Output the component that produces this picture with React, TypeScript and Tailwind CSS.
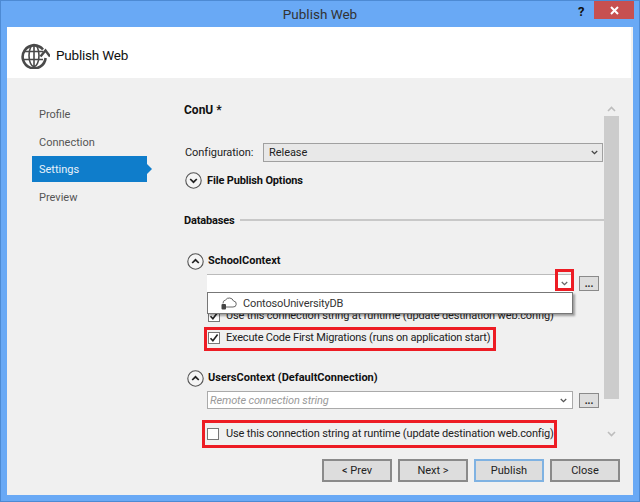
const F = "font-['Roboto',sans-serif]";

function Chevron({ up = false, small = false, className = "" }: { up?: boolean; small?: boolean; className?: string }) {
  return (
    <svg width={small ? 7 : 9} height={small ? 5 : 6} viewBox="0 0 9 6" className={className} fill="none" stroke="currentColor" strokeWidth="1.6">
      <path d={up ? "M1 5l3.5-3.5L8 5" : "M1 1l3.5 3.5L8 1"} />
    </svg>
  );
}

function Expander({ up = false }: { up?: boolean }) {
  return (
    <svg width="17" height="17" viewBox="0 0 17 17" fill="none" className="shrink-0">
      <circle cx="8.5" cy="8.5" r="7.7" fill="#f5f5f5" stroke="#555" strokeWidth="1.1" />
      <path d={up ? "M5.2 10l3.3-3.2 3.3 3.2" : "M5.2 7l3.3 3.2L11.8 7"} stroke="#222" strokeWidth="1.7" />
    </svg>
  );
}

function Check({ checked = false }: { checked?: boolean }) {
  return (
    <span className="w-[12px] h-[12px] shrink-0 border border-[#777] bg-white flex items-center justify-center">
      {checked && (
        <svg width="10" height="10" viewBox="0 0 10 10" fill="none">
          <path d="M1.5 5.2l2.4 2.6L8.6 1.6" stroke="#222" strokeWidth="1.6" />
        </svg>
      )}
    </span>
  );
}

function Btn({ label, focus = false }: { label: string; focus?: boolean }) {
  return (
    <div
      className={`w-[70px] h-[23px] flex items-center justify-center border-2 bg-[#dddddd] text-[#222] ${
        focus ? "border-[#7fb2e2]" : "border-[#8a8a8a]"
      }`}
    >
      <span className="mt-[2px]">{label}</span>
    </div>
  );
}

function Dots() {
  return (
    <div className="ml-[6px] w-[20px] h-[15px] border border-[#8a8a8a] bg-[#dddddd] flex items-end justify-center text-[#222] text-[10px] leading-[12px] font-bold">
      ...
    </div>
  );
}

export default function App() {
  return (
    <div className={`${F} w-[640px] h-[502px] bg-[#69a9f5] border border-[#4d8ad3] flex flex-col text-[11px] text-[#222] overflow-hidden`}>
      <div className="relative h-[26px] shrink-0 flex items-center justify-center text-[13.5px] text-[#333]">
        Publish Web
        <span className="absolute left-[577px] top-[1px] text-[13px] font-bold text-[#111]">?</span>
        <div className="absolute left-[593px] top-0 w-[40px] h-[18px] bg-[#c75050] flex items-center justify-center">
          <svg width="9" height="9" viewBox="0 0 9 9" fill="none">
            <path d="M1 1l7 7M8 1L1 8" stroke="#fff" strokeWidth="2" />
          </svg>
        </div>
      </div>

      <div className="flex-1 mx-[6px] mb-[6px] bg-[#f0f0f0] flex flex-col min-h-0">
        <div className="h-[51px] mr-[2px] shrink-0 bg-white flex items-center pl-[14px] pt-[5px] gap-[6px] text-[13.5px] tracking-[-0.2px] text-[#111]">
          <svg width="29" height="27" viewBox="0 0 29 27" fill="none" stroke="#4a4a4a">
            <path d="M22 7.5A11.5 11.5 0 1 0 24.6 16" strokeWidth="2.6" />
            <ellipse cx="13" cy="13.5" rx="5" ry="11" strokeWidth="1.6" />
            <path d="M2 9.5h20M2 17.5h20M13 2v23" strokeWidth="1.6" />
            <path d="M19.5 14.5l5-6 4.5 6" strokeWidth="2.4" fill="none" />
          </svg>
          <span>Publish Web</span>
        </div>

        <div className="flex-1 flex min-h-0">
          <nav className="w-[177px] shrink-0 pl-[25px] pt-[23px] text-[#555]">
            <div className="h-[28px] pl-[7px] flex items-center">Profile</div>
            <div className="h-[27px] pl-[7px] flex items-center"><span className="mt-[2px]">Connection</span></div>
            <div className="relative h-[26px] w-[115px] pl-[7px] flex items-center bg-[#0f7dcb] text-[#e8f2fa]">
              <span className="mt-[2px]">Settings</span>
              <span className="absolute left-full top-[8px] border-y-[5px] border-y-transparent border-l-[5px] border-l-[#0f7dcb]" />
            </div>
            <div className="h-[30px] pl-[7px] flex items-center"><span className="mt-[2px]">Preview</span></div>
          </nav>

          <main className="w-[420px] shrink-0 pt-[22px] flex flex-col">
            <div className="h-[18px] flex items-center font-bold text-[#111] text-[12px]">
              <span className="mt-[2px]">ConU *</span>
            </div>
            <div className="mt-[25px] h-[19px] flex items-center pl-[1px] tracking-[-0.05px]">
              <span className="w-[78px] mt-[2px]">Configuration:</span>
              <div className="w-[340px] h-[19px] border border-[#a0a0a0] bg-[#e8e8e8] pl-[5px] pr-[4px] flex items-center justify-between">
                <span className="mt-[2px]">Release</span>
                <Chevron small className="text-[#444]" />
              </div>
            </div>
            <div className="mt-[9px] h-[18px] flex items-center gap-[5px] pl-[1px] font-bold text-[#111] tracking-[-0.15px]">
              <Expander />
              <span className="mt-[2px]">File Publish Options</span>
            </div>
            <div className="mt-[22px] h-[18px] flex items-center gap-[5px] font-bold text-[#111] tracking-[-0.15px]">
              <span className="mt-[2px]">Databases</span>
              <span className="flex-1 h-[2px] bg-[#c8c8c8]" />
            </div>
            <div className="mt-[23px] h-[18px] flex items-center gap-[4px] pl-[3px] font-bold text-[#111]">
              <Expander up />
              SchoolContext
            </div>

            <div className="relative pl-[23px]">
              <div className="mt-[4px] flex items-center">
                <div className="w-[366px] h-[18px] bg-white border-t border-[#bbb] flex items-center justify-end pr-[5px]">
                  <Chevron small className="text-[#666]" />
                </div>
                <Dots />
              </div>
              <div className="absolute left-[23px] top-[22px] z-10 w-[366px] h-[22px] bg-white border border-[#777] shadow-[2px_2px_2px_rgba(0,0,0,0.35)] flex items-center pl-[13px] gap-[6px] text-[#333] tracking-[-0.15px]">
                <svg width="16" height="13" viewBox="0 0 16 13" fill="none" stroke="#666">
                  <path d="M5 10h7a3 3 0 0 0 .5-6 4.5 4.5 0 0 0-8-1A3.3 3.3 0 0 0 2 6.5" />
                  <rect x="0.5" y="7" width="4.5" height="5.5" rx="1" fill="#444" stroke="none" />
                </svg>
                <span className="mt-[3px]">ContosoUniversityDB</span>
              </div>
              <div className="mt-[15px] h-[18px] flex items-center gap-[6px] pl-[1px] tracking-[-0.15px]">
                <Check checked />
                Use this connection string at runtime (update destination web.config)
              </div>
              <div className="absolute left-[20px] top-[57px] w-[292px] h-[24px] border-[3px] border-[#ed1c24] pointer-events-none" />
              <div className="absolute left-[371px] top-[-1px] w-[19px] h-[22px] border-[3px] border-[#ed1c24] pointer-events-none z-20" />
              <div className="mt-[4px] h-[18px] flex items-center gap-[6px] pl-[1px] tracking-[-0.2px]">
                <Check checked />
                Execute Code First Migrations (runs on application start)
              </div>
            </div>

            <div className="mt-[22px] h-[18px] flex items-center gap-[4px] pl-[3px] font-bold text-[#111]">
              <Expander up />
              UsersContext (DefaultConnection)
            </div>
            <div className="pl-[23px]">
              <div className="mt-[4px] flex items-center">
                <div className="w-[366px] h-[18px] bg-white border border-[#aaa] flex items-center justify-between pl-[2px] pr-[5px] italic text-[#999] tracking-[-0.15px]">
                  <span className="mt-[2px]">Remote connection string</span>
                  <Chevron small className="text-[#555]" />
                </div>
                <Dots />
              </div>
              <div className="mt-[11px] w-[355px] -ml-[5px] h-[28px] border-[3px] border-[#ed1c24] flex items-center gap-[7px] pl-[2px] whitespace-nowrap tracking-[-0.15px]">
                <Check />
                Use this connection string at runtime (update destination web.config)
              </div>
            </div>
          </main>

          <aside className="w-[15px] shrink-0 pt-[28px] flex flex-col items-center text-[#bdbdbd]">
            <Chevron up />
            <div className="mt-[4px] w-[15px] h-[283px] bg-[#cccccc]" />
            <Chevron className="mt-[32px]" />
          </aside>
        </div>

        <footer className="h-[37px] shrink-0 flex justify-end items-start gap-[6px] pr-[13px] pt-[1px] text-[#222]">
          <Btn label="< Prev" />
          <Btn label="Next >" />
          <Btn label="Publish" focus />
          <Btn label="Close" />
        </footer>
      </div>
    </div>
  );
}
